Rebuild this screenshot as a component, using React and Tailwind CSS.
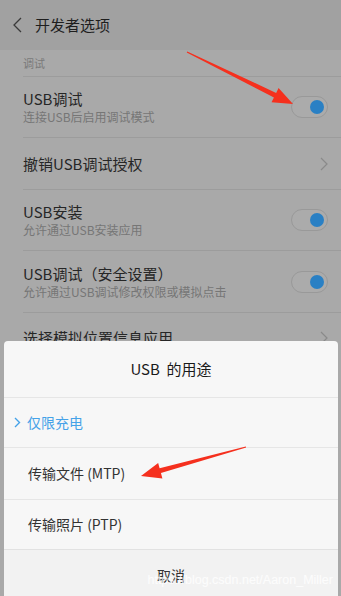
import React from 'react';

const font = { fontFamily: '"Noto Sans CJK SC", "Noto Sans", sans-serif' };

const Toggle = () => (
    <div className="w-[37px] h-[22px] rounded-full border border-[#999999] bg-[#ababab] flex items-center justify-end pr-[3px]">
        <div className="h-[14px] w-[14px] rounded-full bg-[#2a80c4]"></div>
    </div>
);

const Chevron = () => (
    <svg width="8" height="14" viewBox="0 0 8 14" className="text-[#8a8a8a]">
        <path d="M1 1l6 6-6 6" fill="none" stroke="currentColor" strokeWidth="1.2" />
    </svg>
);

const Row = ({ title, sub, right, h }) => (
    <div className={`ml-[23px] pr-[13px] border-b border-[#9c9c9c] flex items-center justify-between ${h}`}>
        <div className="flex flex-col">
            <span className="text-[15px] leading-[20px] text-[#262626]">{title}</span>
            {sub && <span className="text-[12px] leading-[16px] text-[#767676]">{sub}</span>}
        </div>
        {right}
    </div>
);

const Arrow = ({ x1, y1, x2, y2 }) => {
    const dx = x2 - x1, dy = y2 - y1;
    const len = Math.sqrt(dx * dx + dy * dy);
    const ux = dx / len, uy = dy / len;
    const px = -uy, py = ux;
    const hl = 20, hw = 8;
    const bx = x2 - ux * hl, by = y2 - uy * hl;
    const pts = [
        [x1 + px * 0.6, y1 + py * 0.6],
        [bx + px * 2.5, by + py * 2.5],
        [bx + px * hw, by + py * hw],
        [x2, y2],
        [bx - px * hw, by - py * hw],
        [bx - px * 2.5, by - py * 2.5],
        [x1 - px * 0.6, y1 - py * 0.6],
    ].map(p => p.join(',')).join(' ');
    return <polygon points={pts} fill="#f5301e" />;
};

export default function App() {
    return (
        <div className="relative w-[341px] h-[596px] overflow-hidden bg-[#a9a9a9]" style={font}>
            <div className="h-[50px] bg-[#a1a1a1] flex items-center pl-[13px] gap-[13px]">
                <svg width="9" height="16" viewBox="0 0 9 16" className="text-[#3a3a3a]">
                    <path d="M8 1L1 8l7 7" fill="none" stroke="currentColor" strokeWidth="1.3" />
                </svg>
                <span className="text-[15px] text-[#1e1e1e]">开发者选项</span>
            </div>
            <div className="ml-[23px] h-[27px] border-b border-[#9c9c9c] flex items-center">
                <span className="text-[11px] text-[#7a7a7a]">调试</span>
            </div>
            <Row h="h-[61px]" title="USB调试" sub="连接USB后启用调试模式" right={<Toggle />} />
            <Row h="h-[52px]" title="撤销USB调试授权" right={<Chevron />} />
            <Row h="h-[61px]" title="USB安装" sub="允许通过USB安装应用" right={<Toggle />} />
            <Row h="h-[62px]" title="USB调试（安全设置）" sub="允许通过USB调试修改权限或模拟点击" right={<Toggle />} />
            <div className="ml-[23px] pr-[13px] h-[50px] flex items-center justify-between">
                <span className="text-[15px] text-[#262626]">选择模拟位置信息应用</span>
                <Chevron />
            </div>

            <div className="absolute left-[4px] right-[3px] top-[341px] bottom-0 bg-[#f7f7f7] rounded-t-[4px] flex flex-col">
                <div className="h-[57px] border-b border-[#e6e6e6] flex items-center justify-center">
                    <span className="text-[15px] text-[#1a1a1a]">USB&nbsp;&nbsp;的用途</span>
                </div>
                <div className="h-[50px] border-b border-[#e6e6e6] flex items-center pl-[10px] gap-[6px]">
                    <svg width="7" height="11" viewBox="0 0 7 11" className="text-[#45a2e8]">
                        <path d="M1 1l4.5 4.5L1 10" fill="none" stroke="currentColor" strokeWidth="1.4" />
                    </svg>
                    <span className="text-[14px] text-[#45a2e8]">仅限充电</span>
                </div>
                <div className="h-[52px] border-b border-[#e6e6e6] flex items-center pl-[24px]">
                    <span className="text-[14px] text-[#333333]">传输文件 (MTP)</span>
                </div>
                <div className="h-[50px] border-b border-[#e2e2e2] flex items-center pl-[24px]">
                    <span className="text-[14px] text-[#333333]">传输照片 (PTP)</span>
                </div>
                <div className="flex-1 bg-[#f2f2f2] flex items-center justify-center pt-[4px]">
                    <span className="text-[14px] text-[#333333]">取消</span>
                </div>
            </div>

            <svg className="absolute inset-0 pointer-events-none" width="341" height="596">
                <Arrow x1={187} y1={52} x2={293} y2={104} />
                <Arrow x1={246} y1={447} x2={141} y2={476} />
            </svg>

            <span
                className="absolute right-[8px] bottom-[6px] text-[12.5px] text-white/80"
                style={{ fontFamily: '"Liberation Sans", Arial, sans-serif' }}
            >
                https://blog.csdn.net/Aaron_Miller
            </span>
        </div>
    );
}
